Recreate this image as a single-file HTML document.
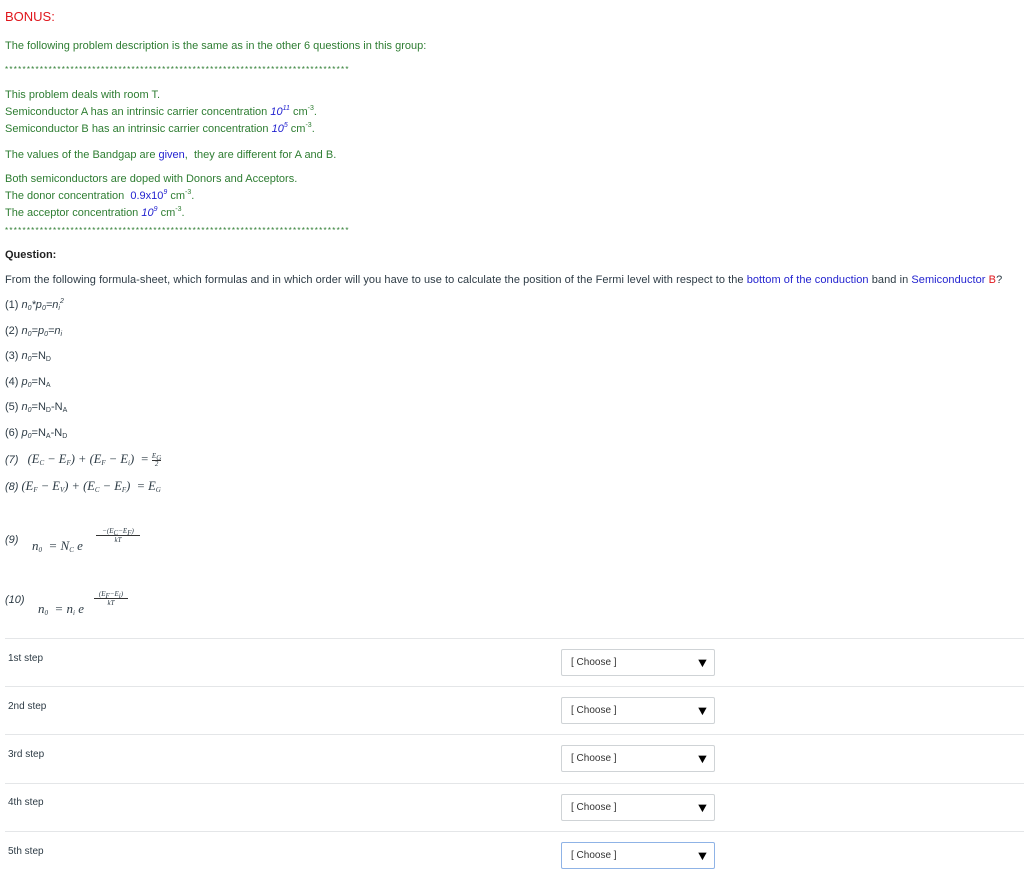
<!DOCTYPE html>
<html><head><meta charset="utf-8"><style>
body{margin:0;width:1024px;height:881px;background:#fff;position:relative;overflow:hidden;font-family:"Liberation Sans",sans-serif;font-size:11px;color:#2d3b45}
.a{position:absolute;left:5px;white-space:nowrap;line-height:14px}
.g{color:#2e7d32}
.b{color:#2323d0}
.r{color:#e0161c}
.m{font-family:"Liberation Serif",serif;font-style:italic;font-size:12.5px}
sup{font-size:7px;vertical-align:5px;line-height:0}
sub{font-size:7px;vertical-align:-2px;line-height:0}
.st{font-size:8px;letter-spacing:1.25px;color:#2e7d32}
.hr{position:absolute;left:5px;right:0;height:1px;background:#e4e6e8}
.sel{position:absolute;left:561px;width:152px;height:25px;border:1px solid #cfd3d6;border-radius:2px;background:#fff}
.sel span{position:absolute;left:9px;top:7px;font-size:10px;color:#333}
.sel i{position:absolute;right:5px;top:5px;font-style:normal;font-size:13px;color:#000;transform:scaleX(1.1)}
.lab{position:absolute;left:8px;font-size:10px;color:#2d3b45}
</style></head><body>
<div class="a r" style="top:10px;font-size:13px">BONUS:</div>
<div class="a g" style="top:39px">The following problem description is the same as in the other 6 questions in this group:</div>
<div class="a st" style="top:63px">*******************************************************************************</div>
<div class="a g" style="top:88px">This problem deals with room T.</div>
<div class="a g" style="top:105px">Semiconductor A has an intrinsic carrier concentration <span class="b"><i>10<sup>11</sup></i></span> cm<sup>-3</sup>.</div>
<div class="a g" style="top:122px">Semiconductor B has an intrinsic carrier concentration <span class="b"><i>10<sup>5</sup></i></span> cm<sup>-3</sup>.</div>
<div class="a g" style="top:148px">The values of the Bandgap are <span class="b">given</span>,&nbsp; they are different for A and B.</div>
<div class="a g" style="top:172px">Both semiconductors are doped with Donors and Acceptors.</div>
<div class="a g" style="top:189px">The donor concentration&nbsp; <span class="b">0.9x10<sup><i>9</i></sup></span> cm<sup>-3</sup>.</div>
<div class="a g" style="top:206px">The acceptor concentration <span class="b"><i>10<sup>9</sup></i></span> cm<sup>-3</sup>.</div>
<div class="a st" style="top:224px">*******************************************************************************</div>
<div class="a" style="top:248px;font-weight:bold;color:#222">Question:</div>
<div class="a" style="top:273px;letter-spacing:.06px">From the following formula-sheet, which formulas and in which order will you have to use to calculate the position of the Fermi level with respect to the <span class="b">bottom of the conduction</span> band in <span class="b">Semiconductor</span> <span class="r">B</span>?</div>
<div class="a" style="top:298px">(1) <i>n<sub>0</sub>*p<sub>0</sub>=n<sub>i</sub><sup>2</sup></i></div>
<div class="a" style="top:324px">(2) <i>n<sub>0</sub>=p<sub>0</sub>=n<sub>i</sub></i></div>
<div class="a" style="top:349px">(3) <i>n<sub>0</sub></i>=N<sub>D</sub></div>
<div class="a" style="top:375px">(4) <i>p<sub>0</sub></i>=N<sub>A</sub></div>
<div class="a" style="top:400px">(5) <i>n<sub>0</sub></i>=N<sub>D</sub>-N<sub>A</sub></div>
<div class="a" style="top:426px">(6) <i>p<sub>0</sub></i>=N<sub>A</sub>-N<sub>D</sub></div>
<div class="a" style="top:452px"><i>(7)</i> &nbsp; <span class="m">(E<sub>C</sub> − E<sub>F</sub>) + (E<sub>F</sub> − E<sub>i</sub>) &nbsp;= <span style="display:inline-block;vertical-align:middle;text-align:center;font-size:7px;line-height:7px"><span style="border-bottom:1px solid #333;display:block">E<sub>G</sub></span>2</span></span></div>
<div class="a" style="top:479px"><i>(8)</i> <span class="m">(E<sub>F</sub> − E<sub>V</sub>) + (E<sub>C</sub> − E<sub>F</sub>) &nbsp;= E<sub>G</sub></span></div>
<div class="a" style="top:533px"><i>(9)</i></div>
<div class="a m" style="left:32px;top:539px;font-size:13px">n<sub>0</sub> &nbsp;= N<sub>C</sub> e</div>
<div class="a m" style="left:96px;top:527px;font-size:7px;line-height:8px;text-align:center;width:44px"><span style="display:block;border-bottom:1px solid #333">−(E<sub>C</sub>−E<sub>F</sub>)</span>kT</div>
<div class="a" style="top:593px"><i>(10)</i></div>
<div class="a m" style="left:38px;top:602px;font-size:13px">n<sub>0</sub> &nbsp;= n<sub>i</sub> e</div>
<div class="a m" style="left:94px;top:590px;font-size:7px;line-height:8px;text-align:center;width:34px"><span style="display:block;border-bottom:1px solid #333">(E<sub>F</sub>−E<sub>i</sub>)</span>kT</div>

<div class="hr" style="top:638px"></div>
<div class="lab" style="top:653px">1st step</div>
<div class="sel" style="top:649px"><span>[ Choose ]</span><i>▼</i></div>
<div class="hr" style="top:686px"></div>
<div class="lab" style="top:701px">2nd step</div>
<div class="sel" style="top:697px"><span>[ Choose ]</span><i>▼</i></div>
<div class="hr" style="top:734px"></div>
<div class="lab" style="top:749px">3rd step</div>
<div class="sel" style="top:745px"><span>[ Choose ]</span><i>▼</i></div>
<div class="hr" style="top:783px"></div>
<div class="lab" style="top:797px">4th step</div>
<div class="sel" style="top:794px"><span>[ Choose ]</span><i>▼</i></div>
<div class="hr" style="top:831px"></div>
<div class="lab" style="top:846px">5th step</div>
<div class="sel" style="top:842px;border-color:#8fb3e6"><span>[ Choose ]</span><i>▼</i></div>
</body></html>
